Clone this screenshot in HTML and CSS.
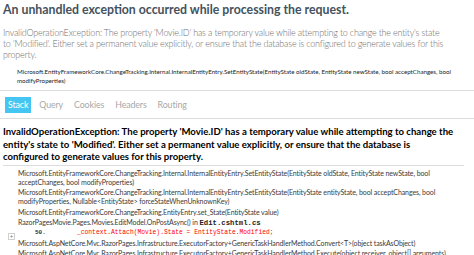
FILE: index.html
```html
<!DOCTYPE html>
<html>
<head>
<meta charset="utf-8">
<link rel="stylesheet" href="styles.css">
</head>
<body>
<h1 class="title">An unhandled exception occurred while processing the request.</h1>
<div class="titleerror">InvalidOperationException: The property 'Movie.ID' has a temporary value while attempting to change the entity's state to&nbsp;'Modified'. Either set a permanent value explicitly, or ensure that the database is configured to generate values for this property.</div>
<p class="location">Microsoft.EntityFrameworkCore.ChangeTracking.Internal.InternalEntityEntry.SetEntityState(EntityState oldState, EntityState newState, bool acceptChanges, bool modifyProperties)</p>
<ul class="header">
  <li class="tab selected">Stack</li>
  <li class="tab">Query</li>
  <li class="tab">Cookies</li>
  <li class="tab">Headers</li>
  <li class="tab">Routing</li>
</ul>
<div class="stackpage">
  <h2 class="stackerror">InvalidOperationException: The property 'Movie.ID' has a temporary value while attempting to change the entity's state to 'Modified'. Either set a permanent value explicitly, or ensure that the database is configured to generate values for this property.</h2>
  <ul class="frames">
    <li class="frame">Microsoft.EntityFrameworkCore.ChangeTracking.Internal.InternalEntityEntry.SetEntityState(EntityState oldState, EntityState newState, bool acceptChanges, bool modifyProperties)</li>
    <li class="frame">Microsoft.EntityFrameworkCore.ChangeTracking.Internal.InternalEntityEntry.SetEntityState(EntityState entityState, bool acceptChanges, bool modifyProperties, Nullable&lt;EntityState&gt; forceStateWhenUnknownKey)</li>
    <li class="frame">Microsoft.EntityFrameworkCore.ChangeTracking.EntityEntry.set_State(EntityState value)</li>
    <li class="frame">RazorPagesMovie.Pages.Movies.EditModel.OnPostAsync() in <code class="file">Edit.cshtml.cs</code>
      <div class="source">
        <span class="expand">+</span>
        <code class="lineno">50.</code>
        <code class="code">_context.Attach(Movie).State = EntityState.Modified;</code>
      </div>
    </li>
    <li class="frame">Microsoft.AspNetCore.Mvc.RazorPages.Infrastructure.ExecutorFactory+GenericTaskHandlerMethod.Convert&lt;T&gt;(object taskAsObject)</li>
    <li class="frame">Microsoft.AspNetCore.Mvc.RazorPages.Infrastructure.ExecutorFactory+GenericTaskHandlerMethod.Execute(object receiver, object[] arguments)</li>
  </ul>
</div>
</body>
</html>
```
FILE: styles.css
```css
html, body {
  margin: 0;
  padding: 0;
  background: #fff;
}
body {
  font-family: Lato, "Open Sans", sans-serif;
  color: #222;
  padding: 0 10px 0 3px;
  overflow: hidden;
  height: 255px;
}
.title {
  font-size: 12.3px;
  font-weight: 700;
  color: #44525e;
  margin: 2px 0 0 0;
  line-height: 16px;
}
.titleerror {
  font-size: 9px;
  font-weight: 300;
  letter-spacing: -0.2px;
  color: #6f6f6f;
  line-height: 11px;
  margin-top: 9px;
  padding-right: 8px;
}
.location {
  font-size: 6.2px;
  line-height: 9px;
  margin: 7px 0 0 14px;
  color: #222;
}
.header {
  list-style: none;
  margin: 5px -10px 0 -3px;
  padding: 6px 0 5px 5px;
  border-top: 1px solid #ddd;
  border-bottom: 1px solid #ddd;
  display: flex;
  gap: 5px;
}
.tab {
  font-size: 8.8px;
  letter-spacing: -0.1px;
  line-height: 12px;
  padding: 2px 3px;
  color: #a8a8a8;
}
.tab.selected {
  background: #44c5f2;
  color: #fff;
}
.stackerror {
  font-size: 9.6px;
  font-weight: 700;
  color: #000;
  line-height: 12.5px;
  margin: 7px 0 0 0;
  padding: 0 9px 1px 0;
  border-bottom: 1px solid #ddd;
}
.frames {
  list-style: none;
  margin: 3px 0 0 15px;
  padding: 0;
}
.frame {
  font-size: 7px;
  letter-spacing: -0.1px;
  line-height: 9px;
  color: #3a3a3a;
  padding-bottom: 1.5px;
}
.file {
  font-family: "Liberation Mono", monospace;
  font-weight: 700;
  font-size: 7.3px;
  letter-spacing: 0;
  color: #222;
}
.source {
  position: relative;
  display: flex;
  align-items: center;
  height: 9px;
}
.expand {
  position: absolute;
  left: -10px;
  top: 5px;
  width: 5px;
  height: 5px;
  border: 1px solid #d0d0d0;
  font-size: 6px;
  line-height: 5px;
  text-align: center;
  color: #777;
}
.lineno {
  font-family: "Liberation Mono", monospace;
  font-size: 6px;
  font-weight: 700;
  letter-spacing: 0;
  color: #333;
  margin-left: 17px;
  width: 42px;
}
.code {
  font-family: "Liberation Mono", monospace;
  font-size: 6.3px;
  letter-spacing: 0;
  color: #f00;
  white-space: pre;
}
```
